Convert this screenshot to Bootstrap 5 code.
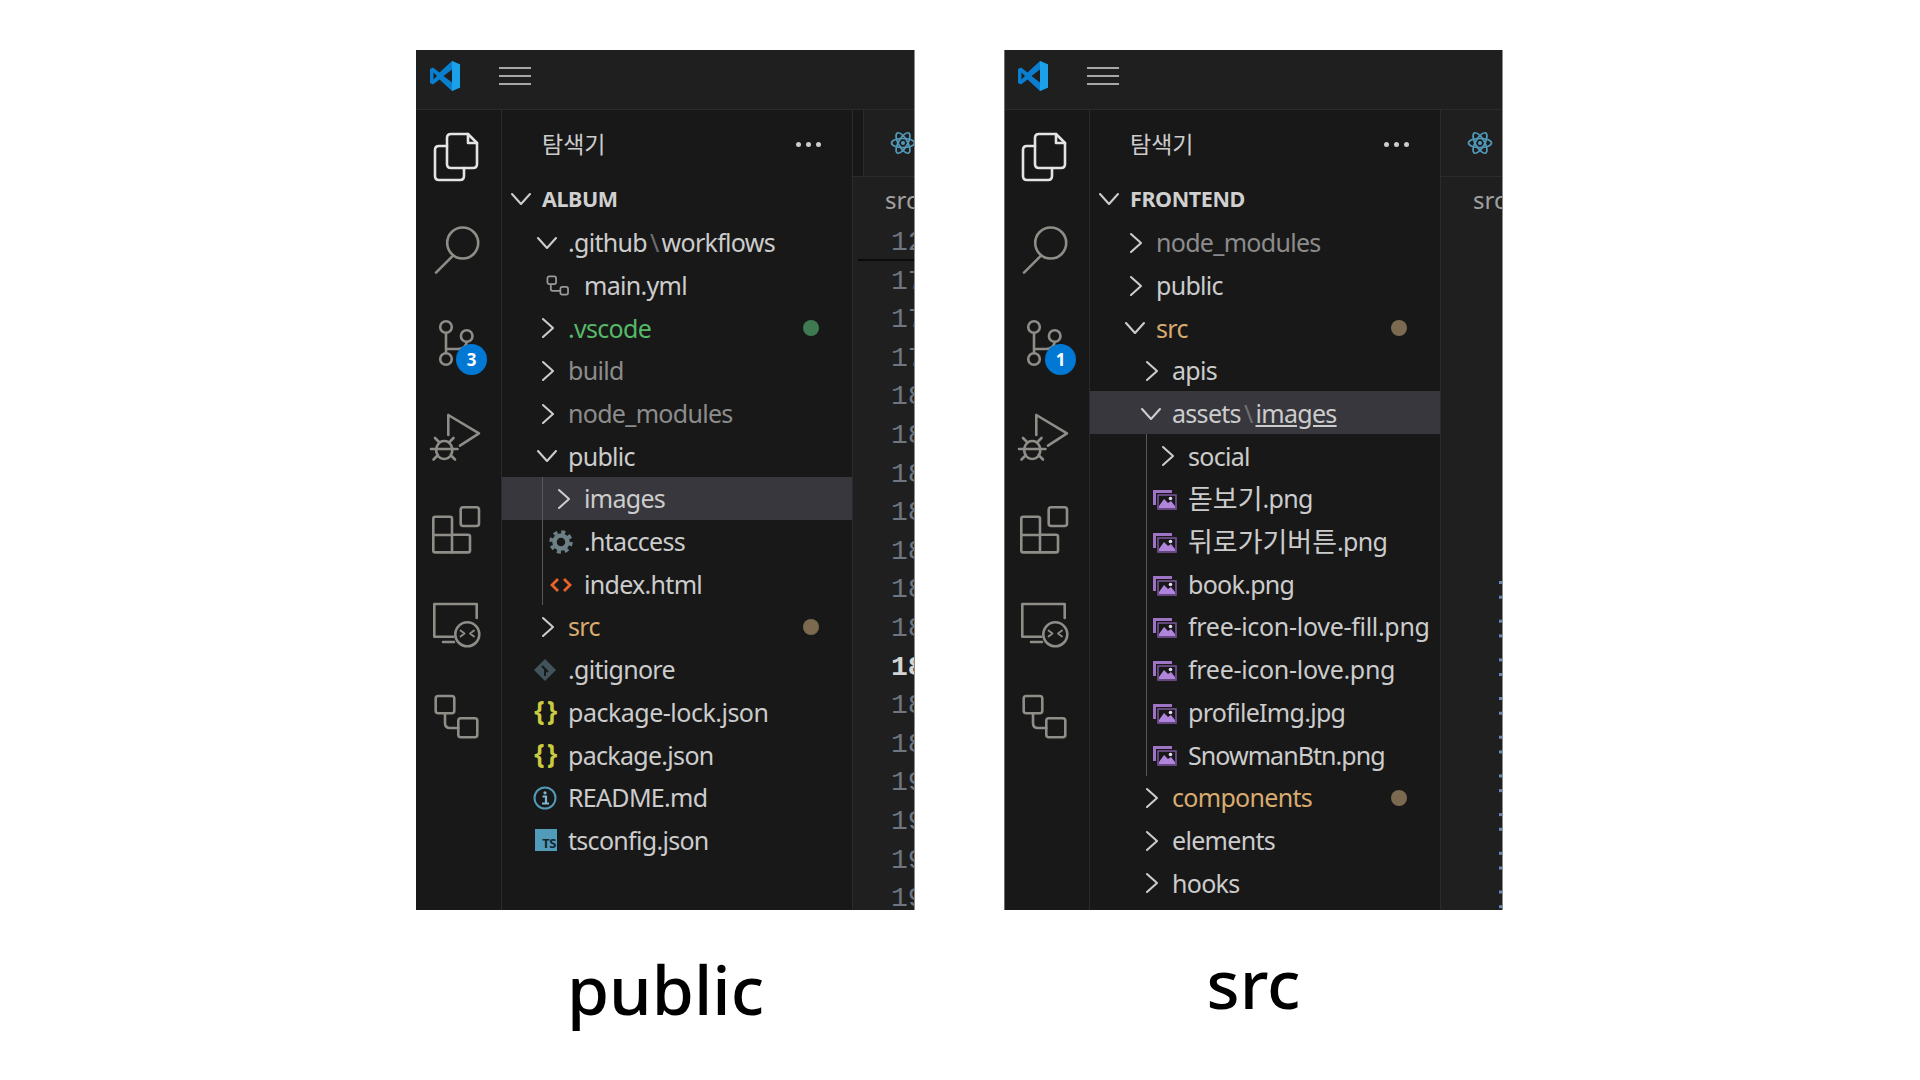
<!DOCTYPE html>
<html lang="en">
<head>
    <meta charset="UTF-8">
    <meta name="viewport" content="width=device-width, initial-scale=1.0">
    <title>public / src</title>
    <link rel="stylesheet" href="https://cdn.jsdelivr.net/npm/bootstrap@5.3.0/dist/css/bootstrap.min.css">
    <style>
        body { background: #fff; height: 1080px; overflow: hidden; }
        .page { padding: 50px 1px 0 0; gap: 89px; }
        .shot-col { width: 499px; }
        .shot { height: 860px; background: #181818; overflow: hidden; color: #ccc; font-family: "Noto Sans", "Noto Sans CJK KR", sans-serif; border-right: 1px solid #8c8c8c; }
        .shot-edge { border-left: 1px solid #6c6c6c; }
        .titlebar { height: 60px; background: #1f1f1f; border-bottom: 1px solid #2b2b2b; flex: none; padding: 0 0 7px 13px; }
        .shot-edge .titlebar { padding-left: 12px; }
        .titlebar svg { display: block; flex: none; }
        .menu-ico { margin-left: 38px; }
        .activity { width: 86px; flex: none; border-right: 1px solid #2b2b2b; }
        .shot-edge .activity { width: 85px; }
        .act-cell { height: 93px; position: relative; flex: none; }
        .shot-edge .act-cell svg { margin-left: -1px; }
        .act-cell svg { display: block; fill: none; stroke: #8f8d88; stroke-width: 2.6; stroke-linecap: round; stroke-linejoin: round; }
        .act-badge { position: absolute; left: 40px; top: 47.5px; width: 31px; height: 31px; border-radius: 50%; background: #0078d4; color: #fff; font-size: 17px; font-weight: 700; line-height: 31px; text-align: center; }
        .sidebar { width: 350px; flex: none; }
        .side-head { height: 68px; padding: 1px 31px 0 40px; font-size: 23px; flex: none; }
        .side-dots { gap: 5px; }
        .side-dots i { width: 5px; height: 5px; border-radius: 50%; background: #ccc; display: block; }
        .tree-row { height: 42.7px; padding-top: 2px; font-size: 25px; letter-spacing: -0.7px; white-space: nowrap; padding-right: 33px; flex: none; }
        .tree-head { padding-top: 0; font-weight: 700; font-size: 21.5px; letter-spacing: -0.4px; color: #d0d0d0; }
        .tree-wide { letter-spacing: -0.3px; }
        .tree-lock { letter-spacing: -0.5px; }
        .tree-tight { letter-spacing: -0.95px; }
        .ko-text { font-size: 27px; letter-spacing: 0; }
        .lv0 { padding-left: 2px; }
        .lv1 { padding-left: 28px; }
        .lv2 { padding-left: 44px; }
        .lv3 { padding-left: 60px; }
        .twist { width: 38px; flex: none; display: flex; justify-content: center; align-items: center; padding-right: 2px; }
        .twist-open { padding-right: 5px; }
        .twist svg { fill: none; stroke: #ccc; stroke-width: 2.1; stroke-linecap: round; stroke-linejoin: round; }
        .file-ico { width: 38px; height: 28px; flex: none; display: flex; justify-content: flex-end; align-items: center; padding-right: 11px; }
        .file-ico-flow { padding-right: 15px; }
        .tree-sel { background: #37373d; }
        .tree-muted { color: #8c8c8c; }
        .tree-green { color: #56b968; }
        .tree-orange { color: #d9ab6f; }
        .tree-sep { color: #6f6f6f; padding: 0 3px; }
        .tree-dot { width: 16px; height: 16px; border-radius: 50%; margin-left: auto; }
        .dot-green { background: #3f7a50; }
        .dot-brown { background: #7c6a50; }
        .guide-wrap { position: relative; }
        .guide-wrap::before { content: ""; position: absolute; top: 0; bottom: 0; width: 1px; background: #585858; z-index: 1; }
        .guide-left::before { left: 40px; }
        .guide-right::before { left: 56px; }
        .ico-json { color: #cbcb41; font-weight: 700; font-size: 26px; letter-spacing: -2.2px; line-height: 28px; white-space: pre; margin: -5px 2px 0 0; }
        .ico-ts { width: 22px; height: 22px; background: #519aba; color: #14262e; font-size: 13px; font-weight: 700; display: flex; align-items: flex-end; justify-content: flex-end; line-height: 15px; padding-right: 1px; letter-spacing: -0.5px; margin-top: -2px; }
        .editor { min-width: 0; background: #1f1f1f; border-left: 1px solid #2b2b2b; }
        .tab-strip { height: 67px; background: #181818; border-bottom: 1px solid #2b2b2b; flex: none; }
        .tab-lead { width: 11px; flex: none; border-right: 1px solid #2b2b2b; }
        .tab-one { background: #1f1f1f; height: 66px; width: 100%; }
        .tab-one svg { flex: none; margin-left: 2px; }
        .crumb { height: 45px; color: #a0a0a0; font-size: 24px; padding-left: 32px; flex: none; }
        .gutter { font-family: "Liberation Mono", monospace; font-size: 28px; line-height: 38.6px; color: #6e7681; padding-left: 38px; white-space: nowrap; margin-top: 2px; }
        .gutter-active { color: #d4d4d4; font-weight: 700; }
        .sticky-line { height: 2px; background: #0b0b0b; margin: 0 0 -2px 5px; position: relative; top: 37px; }
        .edge-marks { margin-top: 359px; background-image: linear-gradient(#6488bd 3px, transparent 3px), linear-gradient(#6488bd 3px, transparent 3px); background-size: 3px 38.7px; background-position: right 0 top 0, right 0 top 14.7px; background-repeat: repeat-y; }
        .cap { font-family: "Noto Sans", "Noto Sans CJK KR", sans-serif; color: #000; font-weight: 500; font-size: 68px; line-height: 1; text-align: center; }
        .cap-left { padding-top: 45px; }
        .cap-right { padding-top: 39px; }
    </style>
</head>
<body>
    <svg width="0" height="0" class="position-absolute">
        <symbol id="vsc-logo" viewBox="0 0 32 32">
            <path d="M23 1l8 3.500v23L23 31 10.500 19.500 4 24.500l-3-1.500V9l3-1.500 6.500 5z" fill="#0a7fd0"/>
            <path d="M23 1l8 3.500v23L23 31z" fill="#1ba1ea"/>
            <path d="M23 9.500L14.500 16l8.500 6.500zM4.500 12.500v7L8 16z" fill="#1f1f1f"/>
        </symbol>
        <symbol id="menu-lines" viewBox="0 0 32 18"><path d="M0 1h32M0 9h32M0 17h32" stroke="#a8a8a8" stroke-width="2"/></symbol>
        <symbol id="chev-r" viewBox="0 0 14 22"><path d="M2 2l10 9-10 9"/></symbol>
        <symbol id="chev-d" viewBox="0 0 22 14"><path d="M2 2l9 10 9-10"/></symbol>
        <symbol id="ico-img" viewBox="0 0 24 22">
            <path d="M0 2h19v3H3v12H0z" fill="#a074c4"/>
            <path d="M5 7h18v14H5z" fill="#181818" stroke="#7d57a0" stroke-width="1.500"/>
            <path d="M6 20v-2l5-7 4 4 3-2 4 5v2z" fill="#b184dc"/>
            <circle cx="17.500" cy="10.500" r="1.800" fill="#e6dcf2"/>
        </symbol>
        <symbol id="ico-react" viewBox="0 0 26 26">
            <g fill="none" stroke="#519aba" stroke-width="1.700">
                <ellipse cx="13" cy="13" rx="11.500" ry="4.500"/>
                <ellipse cx="13" cy="13" rx="11.500" ry="4.500" transform="rotate(60 13 13)"/>
                <ellipse cx="13" cy="13" rx="11.500" ry="4.500" transform="rotate(120 13 13)"/>
            </g>
            <circle cx="13" cy="13" r="2" fill="#519aba"/>
        </symbol>
        <symbol id="ico-flow" viewBox="0 0 24 24">
            <g fill="none" stroke="#9a9a9a" stroke-width="1.800">
                <rect x="1.500" y="2" width="9" height="8" rx="2"/>
                <rect x="15" y="13" width="8" height="8" rx="2"/>
                <path d="M5 10v5q0 2 2 2h8"/>
            </g>
        </symbol>
        <symbol id="ico-gear" viewBox="0 0 24 24">
            <circle cx="12" cy="12" r="6.500" fill="none" stroke="#6d8086" stroke-width="4.500"/>
            <circle cx="12" cy="12" r="10" fill="none" stroke="#6d8086" stroke-width="3.500" stroke-dasharray="4 3.850"/>
        </symbol>
        <symbol id="ico-html" viewBox="0 0 24 24"><path d="M9 6l-6 6 6 6M15 6l6 6-6 6" fill="none" stroke="#e8642a" stroke-width="2.800"/></symbol>
        <symbol id="ico-git" viewBox="0 0 24 24">
            <path d="M12 1l11 11-11 11L1 12z" fill="#41535b"/>
            <path d="M9 8l6 6M12 11v7" stroke="#181818" stroke-width="2"/>
        </symbol>
        <symbol id="ico-info" viewBox="0 0 24 24">
            <circle cx="12" cy="12" r="10.500" fill="none" stroke="#519aba" stroke-width="2"/>
            <path d="M9.500 10.500H13V17M9 17.500h7" fill="none" stroke="#7fb7cf" stroke-width="2.200"/>
            <circle cx="12" cy="6.800" r="1.600" fill="#7fb7cf"/>
        </symbol>
        <symbol id="act-files" viewBox="0 0 86 93">
            <path d="M31 28q0-4 4-4h17l9 9v21q0 4-4 4H35q-4 0-4-4z" stroke="#e4e4e4"/>
            <path d="M52 24v9h9" stroke="#e4e4e4"/>
            <path d="M31 36h-8q-4 0-4 4v26q0 4 4 4h21q4 0 4-4v-8" stroke="#e4e4e4"/>
        </symbol>
        <symbol id="act-search" viewBox="0 0 86 93">
            <circle cx="46.700" cy="40" r="15.500"/>
            <path d="M36 53.700L20 69.700"/>
        </symbol>
        <symbol id="act-scm" viewBox="0 0 86 93">
            <circle cx="30" cy="31" r="5.800"/>
            <circle cx="50.700" cy="40" r="5.800"/>
            <circle cx="30" cy="63" r="5.800"/>
            <path d="M30 37v20M30 53h12q8 0 8.700-7"/>
        </symbol>
        <symbol id="act-debug" viewBox="0 0 86 93">
            <path d="M32.300 26L63 44.300 44 56.700M32.300 26v20"/>
            <path d="M28.300 52a8 9 0 1 1-.1 0zM20.500 60h15.600M23 53l-4-4M33.500 53l4-4M20 60h-5M36.500 60h5M22 66l-4.500 4.500M34.500 66l4.500 4.500"/>
        </symbol>
        <symbol id="act-ext" viewBox="0 0 86 93">
            <rect x="44.700" y="25.300" width="18.300" height="18.700" rx="2.500"/>
            <path d="M19.300 34.700h14.700q2 0 2 2v16h16q2 0 2 2v13.700q0 2-2 2H19.300q-2 0-2-2V36.700q0-2 2-2zM17.300 53H36v17.700"/>
        </symbol>
        <symbol id="act-remote" viewBox="0 0 86 93">
            <path d="M60.700 43V29H18.300v32.700h19M27 67h11"/>
            <circle cx="51.300" cy="59.300" r="12"/>
            <path d="M44.500 55.500l4 3-4 3M58 55.500l-4 3 4 3" stroke-width="1.800"/>
        </symbol>
        <symbol id="act-flow" viewBox="0 0 86 93">
            <rect x="19.700" y="28" width="18.600" height="17.300" rx="2.500"/>
            <rect x="42.300" y="50.300" width="19" height="19" rx="2.500"/>
            <path d="M29 45.300V55q0 5 5 5h8.300"/>
        </symbol>
    </svg>

    <div class="page d-flex justify-content-center">
        <!-- public -->
        <div class="shot-col">
            <div class="shot d-flex flex-column">
                <div class="titlebar d-flex align-items-center">
                    <svg width="32" height="32"><use href="#vsc-logo"/></svg>
                    <svg width="32" height="18" class="menu-ico"><use href="#menu-lines"/></svg>
                </div>
                <div class="d-flex flex-grow-1">
                    <div class="activity d-flex flex-column">
                        <div class="act-cell"><svg width="86" height="93"><use href="#act-files"/></svg></div>
                        <div class="act-cell"><svg width="86" height="93"><use href="#act-search"/></svg></div>
                        <div class="act-cell"><svg width="86" height="93"><use href="#act-scm"/></svg><span class="act-badge">3</span></div>
                        <div class="act-cell"><svg width="86" height="93"><use href="#act-debug"/></svg></div>
                        <div class="act-cell"><svg width="86" height="93"><use href="#act-ext"/></svg></div>
                        <div class="act-cell"><svg width="86" height="93"><use href="#act-remote"/></svg></div>
                        <div class="act-cell"><svg width="86" height="93"><use href="#act-flow"/></svg></div>
                    </div>
                    <div class="sidebar d-flex flex-column">
                        <div class="side-head d-flex align-items-center justify-content-between">
                            <span>탐색기</span>
                            <span class="side-dots d-flex"><i></i><i></i><i></i></span>
                        </div>
                        <div class="tree-row tree-head lv0 d-flex align-items-center"><span class="twist twist-open"><svg width="22" height="14"><use href="#chev-d"/></svg></span>ALBUM</div>
                        <div class="tree-row lv1 d-flex align-items-center"><span class="twist twist-open"><svg width="22" height="14"><use href="#chev-d"/></svg></span>.github<span class="tree-sep">\</span>workflows</div>
                        <div class="tree-row lv2 d-flex align-items-center"><span class="file-ico file-ico-flow"><svg width="24" height="24"><use href="#ico-flow"/></svg></span>main.yml</div>
                        <div class="tree-row lv1 tree-green d-flex align-items-center"><span class="twist"><svg width="14" height="22"><use href="#chev-r"/></svg></span>.vscode<span class="tree-dot dot-green"></span></div>
                        <div class="tree-row lv1 tree-muted d-flex align-items-center"><span class="twist"><svg width="14" height="22"><use href="#chev-r"/></svg></span>build</div>
                        <div class="tree-row lv1 tree-muted d-flex align-items-center"><span class="twist"><svg width="14" height="22"><use href="#chev-r"/></svg></span>node_modules</div>
                        <div class="tree-row lv1 d-flex align-items-center"><span class="twist twist-open"><svg width="22" height="14"><use href="#chev-d"/></svg></span>public</div>
                        <div class="guide-wrap guide-left">
                            <div class="tree-row lv2 tree-sel d-flex align-items-center"><span class="twist"><svg width="14" height="22"><use href="#chev-r"/></svg></span>images</div>
                            <div class="tree-row lv2 d-flex align-items-center"><span class="file-ico"><svg width="24" height="24"><use href="#ico-gear"/></svg></span>.htaccess</div>
                            <div class="tree-row lv2 d-flex align-items-center"><span class="file-ico"><svg width="24" height="24"><use href="#ico-html"/></svg></span>index.html</div>
                        </div>
                        <div class="tree-row lv1 tree-orange d-flex align-items-center"><span class="twist"><svg width="14" height="22"><use href="#chev-r"/></svg></span>src<span class="tree-dot dot-brown"></span></div>
                        <div class="tree-row lv1 d-flex align-items-center"><span class="file-ico"><svg width="24" height="24"><use href="#ico-git"/></svg></span>.gitignore</div>
                        <div class="tree-row lv1 tree-lock d-flex align-items-center"><span class="file-ico"><span class="ico-json">{ }</span></span>package-lock.json</div>
                        <div class="tree-row lv1 d-flex align-items-center"><span class="file-ico"><span class="ico-json">{ }</span></span>package.json</div>
                        <div class="tree-row lv1 d-flex align-items-center"><span class="file-ico"><svg width="24" height="24"><use href="#ico-info"/></svg></span>README.md</div>
                        <div class="tree-row lv1 d-flex align-items-center"><span class="file-ico"><span class="ico-ts">TS</span></span>tsconfig.json</div>
                    </div>
                    <div class="editor flex-grow-1 d-flex flex-column">
                        <div class="tab-strip d-flex">
                            <div class="tab-lead"></div>
                            <div class="tab-one d-flex align-items-center ps-4"><svg width="26" height="26"><use href="#ico-react"/></svg></div>
                        </div>
                        <div class="crumb d-flex align-items-center">src</div>
                        <div class="sticky-line"></div>
                        <div class="gutter">
                            <div>12</div><div>17</div><div>17</div><div>17</div><div>18</div><div>18</div><div>18</div><div>18</div><div>18</div><div>18</div><div>18</div>
                            <div class="gutter-active">18</div>
                            <div>18</div><div>18</div><div>19</div><div>19</div><div>19</div><div>19</div>
                        </div>
                    </div>
                </div>
            </div>
            <div class="cap cap-left">public</div>
        </div>

        <!-- src -->
        <div class="shot-col">
            <div class="shot shot-edge d-flex flex-column">
                <div class="titlebar d-flex align-items-center">
                    <svg width="32" height="32"><use href="#vsc-logo"/></svg>
                    <svg width="32" height="18" class="menu-ico"><use href="#menu-lines"/></svg>
                </div>
                <div class="d-flex flex-grow-1">
                    <div class="activity d-flex flex-column">
                        <div class="act-cell"><svg width="86" height="93"><use href="#act-files"/></svg></div>
                        <div class="act-cell"><svg width="86" height="93"><use href="#act-search"/></svg></div>
                        <div class="act-cell"><svg width="86" height="93"><use href="#act-scm"/></svg><span class="act-badge">1</span></div>
                        <div class="act-cell"><svg width="86" height="93"><use href="#act-debug"/></svg></div>
                        <div class="act-cell"><svg width="86" height="93"><use href="#act-ext"/></svg></div>
                        <div class="act-cell"><svg width="86" height="93"><use href="#act-remote"/></svg></div>
                        <div class="act-cell"><svg width="86" height="93"><use href="#act-flow"/></svg></div>
                    </div>
                    <div class="sidebar d-flex flex-column">
                        <div class="side-head d-flex align-items-center justify-content-between">
                            <span>탐색기</span>
                            <span class="side-dots d-flex"><i></i><i></i><i></i></span>
                        </div>
                        <div class="tree-row tree-head lv0 d-flex align-items-center"><span class="twist twist-open"><svg width="22" height="14"><use href="#chev-d"/></svg></span>FRONTEND</div>
                        <div class="tree-row lv1 tree-muted d-flex align-items-center"><span class="twist"><svg width="14" height="22"><use href="#chev-r"/></svg></span>node_modules</div>
                        <div class="tree-row lv1 d-flex align-items-center"><span class="twist"><svg width="14" height="22"><use href="#chev-r"/></svg></span>public</div>
                        <div class="tree-row lv1 tree-orange d-flex align-items-center"><span class="twist twist-open"><svg width="22" height="14"><use href="#chev-d"/></svg></span>src<span class="tree-dot dot-brown"></span></div>
                        <div class="tree-row lv2 d-flex align-items-center"><span class="twist"><svg width="14" height="22"><use href="#chev-r"/></svg></span>apis</div>
                        <div class="tree-row lv2 tree-sel d-flex align-items-center"><span class="twist twist-open"><svg width="22" height="14"><use href="#chev-d"/></svg></span>assets<span class="tree-sep">\</span><span class="text-decoration-underline">images</span></div>
                        <div class="guide-wrap guide-right">
                            <div class="tree-row lv3 d-flex align-items-center"><span class="twist"><svg width="14" height="22"><use href="#chev-r"/></svg></span>social</div>
                            <div class="tree-row lv3 d-flex align-items-center"><span class="file-ico"><svg width="24" height="22"><use href="#ico-img"/></svg></span><span class="ko-text">돋보기</span>.png</div>
                            <div class="tree-row lv3 d-flex align-items-center"><span class="file-ico"><svg width="24" height="22"><use href="#ico-img"/></svg></span><span class="ko-text">뒤로가기버튼</span>.png</div>
                            <div class="tree-row lv3 d-flex align-items-center"><span class="file-ico"><svg width="24" height="22"><use href="#ico-img"/></svg></span>book.png</div>
                            <div class="tree-row lv3 tree-wide d-flex align-items-center"><span class="file-ico"><svg width="24" height="22"><use href="#ico-img"/></svg></span>free-icon-love-fill.png</div>
                            <div class="tree-row lv3 tree-wide d-flex align-items-center"><span class="file-ico"><svg width="24" height="22"><use href="#ico-img"/></svg></span>free-icon-love.png</div>
                            <div class="tree-row lv3 d-flex align-items-center"><span class="file-ico"><svg width="24" height="22"><use href="#ico-img"/></svg></span>profileImg.jpg</div>
                            <div class="tree-row lv3 tree-tight d-flex align-items-center"><span class="file-ico"><svg width="24" height="22"><use href="#ico-img"/></svg></span>SnowmanBtn.png</div>
                        </div>
                        <div class="tree-row lv2 tree-orange d-flex align-items-center"><span class="twist"><svg width="14" height="22"><use href="#chev-r"/></svg></span>components<span class="tree-dot dot-brown"></span></div>
                        <div class="tree-row lv2 d-flex align-items-center"><span class="twist"><svg width="14" height="22"><use href="#chev-r"/></svg></span>elements</div>
                        <div class="tree-row lv2 d-flex align-items-center"><span class="twist"><svg width="14" height="22"><use href="#chev-r"/></svg></span>hooks</div>
                    </div>
                    <div class="editor flex-grow-1 d-flex flex-column">
                        <div class="tab-strip d-flex">
                            <div class="tab-one d-flex align-items-center ps-4"><svg width="26" height="26"><use href="#ico-react"/></svg></div>
                        </div>
                        <div class="crumb d-flex align-items-center">src</div>
                        <div class="edge-marks flex-grow-1"></div>
                    </div>
                </div>
            </div>
            <div class="cap cap-right">src</div>
        </div>
    </div>

    <script src="https://cdn.jsdelivr.net/npm/bootstrap@5.3.0/dist/js/bootstrap.bundle.min.js"></script>
</body>
</html>
